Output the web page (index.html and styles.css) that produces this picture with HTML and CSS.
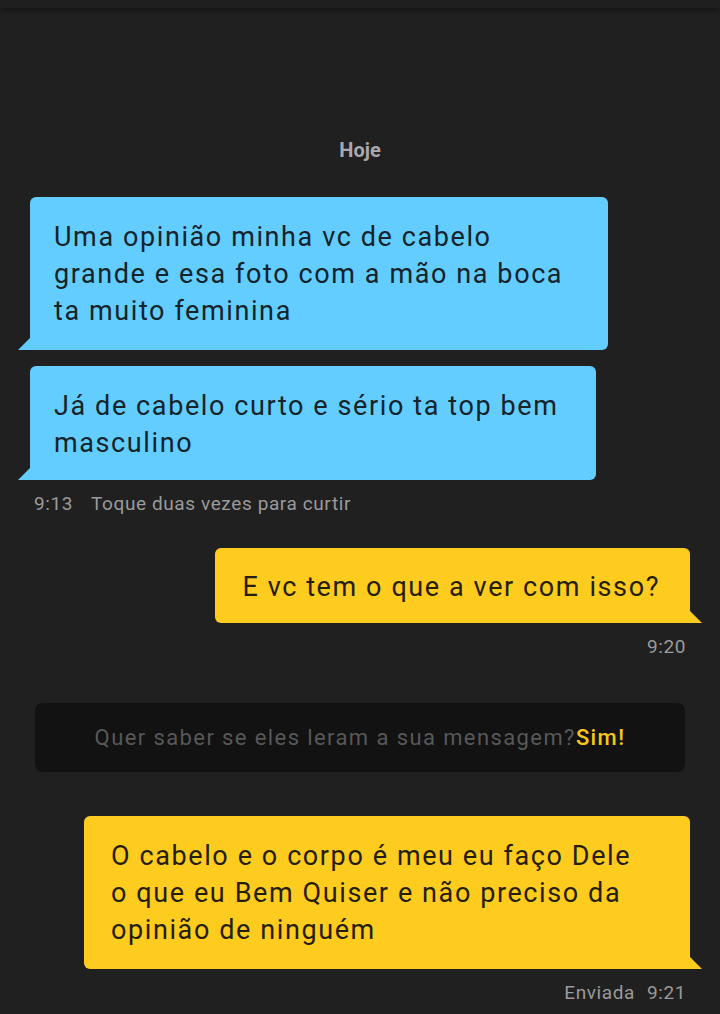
FILE: index.html
```html
<!DOCTYPE html>
<html lang="pt">
<head>
    <meta charset="UTF-8">
    <meta name="viewport" content="width=device-width, initial-scale=1.0">
    <title>Conversa</title>
    <link rel="stylesheet" href="styles.css">
</head>
<body>
    <div class="topbar"></div>

    <main class="chat">
        <div class="day">Hoje</div>

        <div class="msg msg-in">
            <div class="bubble bubble-blue bubble-w1">Uma opinião minha vc de cabelo<br>grande e esa foto com a mão na boca<br>ta muito feminina</div>
        </div>
        <div class="msg msg-in">
            <div class="bubble bubble-blue bubble-w2">Já de cabelo curto e sério ta top bem<br>masculino</div>
        </div>
        <div class="meta meta-in"><span>9:13</span><span>Toque duas vezes para curtir</span></div>

        <div class="msg msg-out">
            <div class="bubble bubble-yellow bubble-short">E vc tem o que a ver com isso?</div>
        </div>
        <div class="meta meta-out">9:20</div>

        <div class="banner">Quer saber se eles leram a sua mensagem?<span class="banner-yes">Sim!</span></div>

        <div class="msg msg-out">
            <div class="bubble bubble-yellow bubble-w4">O cabelo e o corpo é meu eu faço Dele<br>o que eu Bem Quiser e não preciso da<br>opinião de ninguém</div>
        </div>
        <div class="meta meta-out"><span>Enviada</span><span>9:21</span></div>
    </main>
</body>
</html>
```

FILE: styles.css
```css
body {
    margin: 0;
    background-color: #202020;
    font-family: Roboto, "Noto Sans", sans-serif;
    color: #1c1c1c;
    width: 720px;
    height: 1014px;
    overflow: hidden;
}
.topbar {
    height: 8px;
    background-color: #1f1f1f;
    box-shadow: 0 2px 6px rgba(0, 0, 0, 0.45);
}
.chat {
    display: flex;
    flex-direction: column;
    padding: 0 30px;
}
.day {
    text-align: center;
    font-weight: bold;
    font-size: 20px;
    color: #a8a8ae;
    margin-top: 128px;
    margin-bottom: 33px;
    line-height: 28px;
}
.msg {
    display: flex;
}
.msg-in {
    justify-content: flex-start;
    margin-bottom: 16px;
}
.msg-out {
    justify-content: flex-end;
}
.bubble {
    position: relative;
    font-size: 27px;
    letter-spacing: 1.6px;
    line-height: 37px;
    padding: 22px 24px 20px;
    border-radius: 6px;
    box-sizing: border-box;
    white-space: nowrap;
}
.bubble::after {
    content: "";
    position: absolute;
    bottom: 0;
    width: 13px;
    height: 13px;
}
.bubble-blue {
    background-color: #63cdff;
    color: #15232b;
    border-bottom-left-radius: 0;
}
.bubble-blue::after {
    left: -12px;
    background-color: #63cdff;
    clip-path: polygon(100% 0, 100% 100%, 0 100%);
}
.bubble-yellow {
    background-color: #fecb1f;
    color: #251e0c;
    padding-left: 27px;
    padding-right: 30px;
    border-bottom-right-radius: 0;
}
.bubble-yellow::after {
    right: -12px;
    background-color: #fecb1f;
    clip-path: polygon(0 0, 100% 100%, 0 100%);
}
.bubble-short {
    padding-top: 21px;
    padding-bottom: 17px;
}
.bubble-w1 {
    width: 578px;
}
.bubble-w2 {
    width: 566px;
    padding-bottom: 18px;
}
.bubble-w4 {
    width: 606px;
}
.meta {
    font-size: 19px;
    letter-spacing: 0.6px;
    color: #9a9a9a;
    line-height: 24px;
    display: flex;
    gap: 18px;
}
.meta-in {
    margin-top: -4px;
    margin-left: 4px;
    margin-bottom: 32px;
}
.meta-out {
    justify-content: flex-end;
    gap: 12px;
    margin-top: 12px;
    margin-right: 4px;
}
.banner {
    margin: 44px 5px;
    height: 69px;
    background-color: #121212;
    border-radius: 8px;
    display: flex;
    align-items: center;
    justify-content: center;
    font-size: 22px;
    letter-spacing: 1.4px;
    color: #585858;
}
.banner-yes {
    color: #f6c61c;
    font-weight: 500;
}
```
